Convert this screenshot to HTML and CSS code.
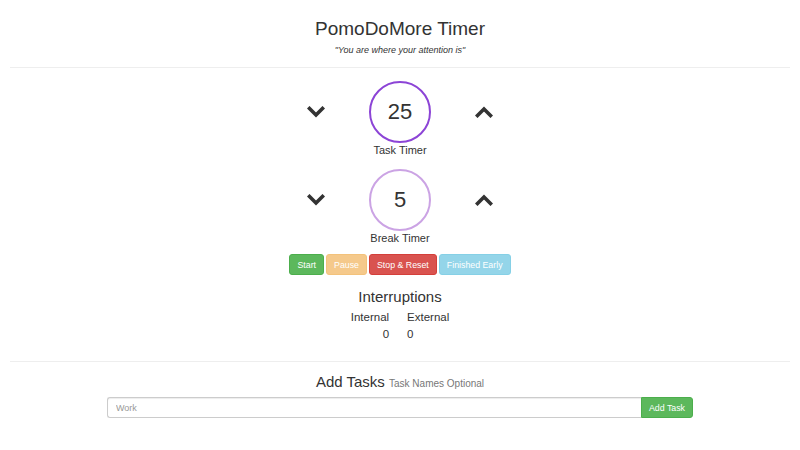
FILE: index.html
```html
<!DOCTYPE html>
<html lang="en">
<head>
    <meta charset="UTF-8">
    <meta name="viewport" content="width=device-width, initial-scale=1.0">
    <title>PomoDoMore Timer</title>
    <link rel="stylesheet" href="styles.css">
</head>
<body>
    <div class="container">
        <!-- Header -->
        <div class="header">
            <h1 class="title">PomoDoMore Timer</h1>
            <p class="quote">"You are where your attention is"</p>
        </div>

        <hr>

        <!-- Timers -->
        <div class="timers">
            <div class="timer">
                <div class="timer-row">
                    <button class="arrow" aria-label="decrease">
                        <svg width="18" height="12" viewBox="0 0 18 12"><polyline points="2.5,2.5 9,9 15.5,2.5" fill="none" stroke="#333" stroke-width="3.6" stroke-linecap="square"/></svg>
                    </button>
                    <div class="circle task">25</div>
                    <button class="arrow" aria-label="increase">
                        <svg width="18" height="12" viewBox="0 0 18 12"><polyline points="2.5,9.5 9,3 15.5,9.5" fill="none" stroke="#333" stroke-width="3.6" stroke-linecap="square"/></svg>
                    </button>
                </div>
                <div class="timer-label">Task Timer</div>
            </div>

            <div class="timer">
                <div class="timer-row">
                    <button class="arrow" aria-label="decrease">
                        <svg width="18" height="12" viewBox="0 0 18 12"><polyline points="2.5,2.5 9,9 15.5,2.5" fill="none" stroke="#333" stroke-width="3.6" stroke-linecap="square"/></svg>
                    </button>
                    <div class="circle break">5</div>
                    <button class="arrow" aria-label="increase">
                        <svg width="18" height="12" viewBox="0 0 18 12"><polyline points="2.5,9.5 9,3 15.5,9.5" fill="none" stroke="#333" stroke-width="3.6" stroke-linecap="square"/></svg>
                    </button>
                </div>
                <div class="timer-label">Break Timer</div>
            </div>
        </div>

        <!-- Controls -->
        <div class="controls">
            <button class="btn btn-success">Start</button>
            <button class="btn btn-warning disabled">Pause</button>
            <button class="btn btn-danger">Stop &amp; Reset</button>
            <button class="btn btn-info disabled">Finished Early</button>
        </div>

        <!-- Interruptions -->
        <div class="interruptions">
            <h3>Interruptions</h3>
            <div class="counts">
                <div class="count internal">
                    <span>Internal</span>
                    <span class="num">0</span>
                </div>
                <div class="count external">
                    <span>External</span>
                    <span class="num">0</span>
                </div>
            </div>
        </div>

        <hr>

        <!-- Add Tasks -->
        <div class="tasks">
            <h3>Add Tasks <small>Task Names Optional</small></h3>
            <div class="input-group">
                <input type="text" placeholder="Work">
                <button class="btn btn-success">Add Task</button>
            </div>
        </div>
    </div>
</body>
</html>
```

FILE: styles.css
```css
body {
    margin: 0;
    font-family: "Liberation Sans", Arial, sans-serif;
    color: #333;
    background-color: #fff;
}

.container {
    padding: 0 10px;
}

hr {
    border: 0;
    border-top: 1px solid #eee;
    margin: 0;
}

/* Header */
.header {
    text-align: center;
    padding: 17px 0 12px;
}

.title {
    font-size: 19px;
    font-weight: normal;
    margin: 0;
    line-height: 24px;
}

.quote {
    font-size: 9px;
    font-style: italic;
    margin: 4px 0 0;
    color: #333;
}

/* Timers */
.timers {
    padding-top: 13px;
    display: flex;
    flex-direction: column;
    gap: 12px;
}

.timer {
    text-align: center;
}

.timer-row {
    display: flex;
    justify-content: center;
    align-items: center;
    gap: 42px;
}

.arrow {
    background: none;
    border: none;
    padding: 0;
    width: 22px;
    height: 14px;
    display: flex;
    align-items: center;
    justify-content: center;
    cursor: pointer;
}

.circle {
    width: 58px;
    height: 58px;
    border-radius: 50%;
    display: flex;
    align-items: center;
    justify-content: center;
    font-size: 22px;
}

.circle.task {
    border: 2.5px solid #8c44d6;
}

.circle.break {
    border: 2.5px solid #cba3e4;
}

.timer-label {
    font-size: 11px;
    line-height: 14px;
}

/* Buttons */
.controls {
    display: flex;
    justify-content: center;
    gap: 2px;
    margin-top: 9px;
}

.btn {
    font-family: inherit;
    font-size: 8.8px;
    color: #fff;
    border: 1px solid transparent;
    border-radius: 3px;
    padding: 0 7px;
    height: 21px;
    cursor: pointer;
}

.btn-success {
    background-color: #5cb85c;
    border-color: #4cae4c;
}

.btn-warning {
    background-color: #f0ad4e;
    border-color: #eea236;
}

.btn-danger {
    background-color: #d9534f;
    border-color: #d43f3a;
}

.btn-info {
    background-color: #5bc0de;
    border-color: #46b8da;
}

.btn.disabled {
    opacity: 0.65;
}

/* Interruptions */
.interruptions {
    text-align: center;
    padding-bottom: 21px;
}

.interruptions h3 {
    font-size: 15px;
    font-weight: normal;
    margin: 13px 0 6px;
}

.counts {
    display: flex;
    justify-content: center;
    gap: 18px;
    font-size: 11.5px;
}

.count {
    display: flex;
    flex-direction: column;
    gap: 5px;
}

.count.internal {
    align-items: flex-end;
}

.count.external {
    align-items: flex-start;
}

/* Tasks */
.tasks {
    text-align: center;
}

.tasks h3 {
    font-size: 15px;
    font-weight: normal;
    margin: 11px 0 7px;
}

.tasks small {
    font-size: 10px;
    color: #777;
}

.input-group {
    display: flex;
    width: 586px;
    margin: 0 auto;
}

.input-group input {
    flex: 1;
    height: 21px;
    box-sizing: border-box;
    border: 1px solid #ccc;
    border-right: 0;
    border-radius: 3px 0 0 3px;
    padding: 0 8px;
    font-family: inherit;
    font-size: 9px;
    box-shadow: inset 0 1px 1px rgba(0, 0, 0, 0.075);
}

.input-group input::placeholder {
    color: #999;
}

.input-group .btn {
    border-radius: 0 3px 3px 0;
    padding: 0 7px;
}
```
